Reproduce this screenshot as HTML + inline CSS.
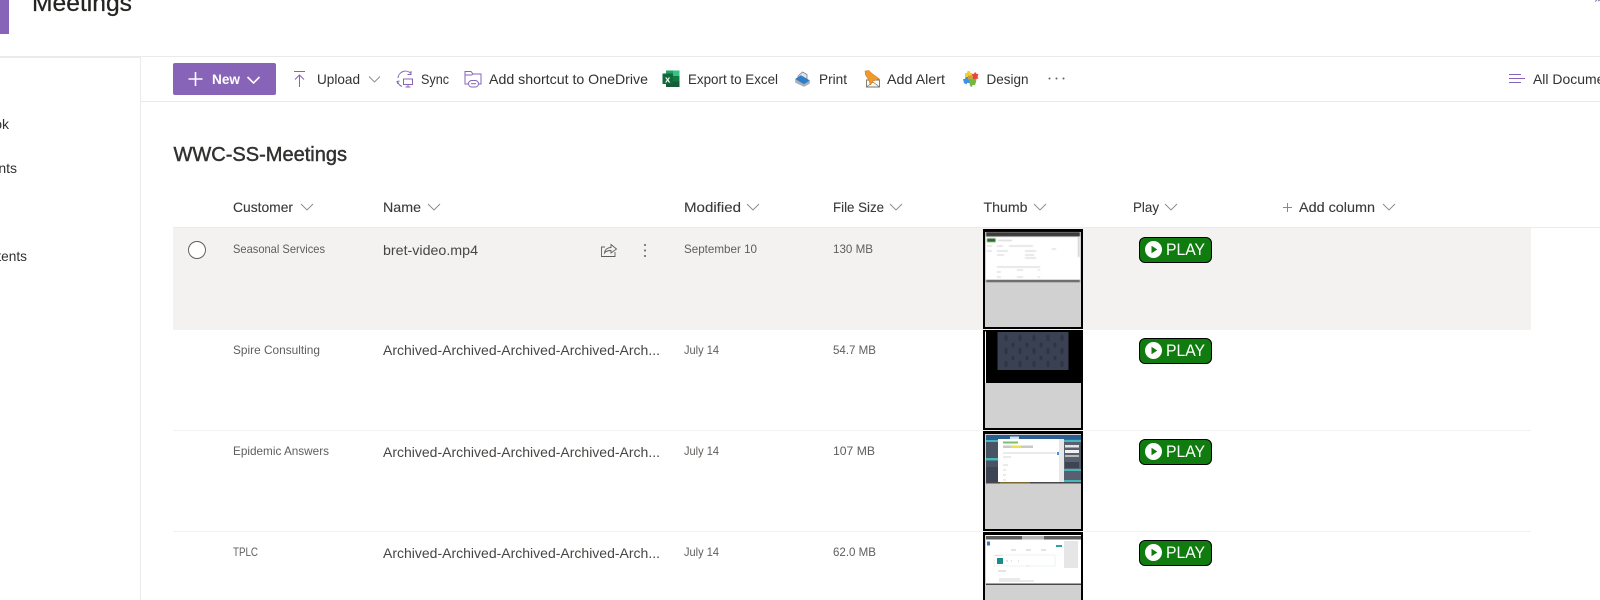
<!DOCTYPE html>
<html><head><meta charset="utf-8"><title>WWC-SS-Meetings</title>
<style>
html,body{margin:0;padding:0;background:#fff;width:1600px;height:600px;overflow:hidden}
svg{display:block;font-family:"Liberation Sans",Arial,sans-serif}
.tb{font-size:14px;fill:#323130}
.h{font-size:14px;fill:#3b3a39;stroke:#3b3a39;stroke-width:.12}
.c{font-size:12px;fill:#605e5c}
.n{font-size:14px;fill:#484644}
.m{font-size:12px;fill:#605e5c}
.pl{font-size:17px;fill:#fff}
.chev{fill:none;stroke:#8a8886;stroke-width:.9}
.ic{fill:none;stroke:#8764b8;stroke-width:1}
</style></head><body>
<svg width="1600" height="600" viewBox="0 0 1600 600" xmlns="http://www.w3.org/2000/svg">
<defs>
<filter id="b"><feGaussianBlur stdDeviation=".6"/></filter>
<filter id="s"><feGaussianBlur stdDeviation=".3"/></filter>
<g id="play">
<rect x=".5" y=".5" width="72" height="25" rx="5.5" fill="#107c10" stroke="#000"/>
<circle cx="14.5" cy="12.5" r="8.5" fill="#fff"/>
<path d="M12.5 8.8 L18.3 12.5 L12.5 16.2Z" fill="#107c10"/>
<text class="pl" x="27" y="18" textLength="39" lengthAdjust="spacingAndGlyphs">PLAY</text>
</g>
</defs>

<!-- site header -->
<rect x="0" y="0" width="9" height="34" fill="#8764b8"/>
<text x="32" y="11" font-size="24" fill="#252423" stroke="#252423" stroke-width=".25" textLength="100" lengthAdjust="spacingAndGlyphs">Meetings</text>
<path d="M1595 1.5 L1597 0 M1598 1 L1600 0" stroke="#8a7ab0" stroke-width="1"/>
<rect x="0" y="56" width="1600" height="1" fill="#eaeaea"/>
<rect x="0" y="57" width="140" height="1" fill="#eaeaea"/>
<rect x="140" y="57" width="1" height="543" fill="#eaeaea"/>
<rect x="141" y="101" width="1459" height="1" fill="#eaeaea"/>

<!-- left nav -->
<text class="tb" x="9" y="129" text-anchor="end">Notebook</text>
<text class="tb" x="17" y="173" text-anchor="end">Documents</text>
<text class="tb" x="-52" y="261" textLength="79" lengthAdjust="spacingAndGlyphs">Site contents</text>

<!-- command bar -->
<rect x="173" y="63" width="103" height="32" rx="2" fill="#8764b8"/>
<path d="M195.5 72 V86 M188.5 79 H202.5" stroke="#fff" stroke-width="1.6" fill="none"/>
<text x="212" y="84" font-size="14" font-weight="700" fill="#fff" textLength="28" lengthAdjust="spacingAndGlyphs">New</text>
<path d="M247.5 77 L253.5 83 L259.5 77" fill="none" stroke="#fff" stroke-width="1.6"/>

<path d="M294 71.5 H305 M299.5 87 V75 M295 79.5 L299.5 75 L304 79.5" class="ic"/>
<text class="tb" x="317" y="84" textLength="43" lengthAdjust="spacingAndGlyphs">Upload</text>
<path class="chev" d="M369 76.5 L374.5 82 L380 76.5"/>

<g class="ic">
<path d="M398 78 A7.5 7.5 0 0 1 411 73.5 M411 71 V74.5 H407.5"/>
<path d="M397.5 81 A7.5 7.5 0 0 0 402 86.5 M398 84 L397 81.5 L399.5 81"/>
<rect x="403.5" y="79" width="9" height="5.5"/><path d="M408 84.5 V87 M405.5 87 H410.5"/>
</g>
<text class="tb" x="421" y="84" textLength="28" lengthAdjust="spacingAndGlyphs">Sync</text>

<g class="ic">
<path d="M468 84 H465 V71.5 H471 L473 74 H481 V84 H479 M465 75 H471.5 L473 74"/>
<rect x="468.5" y="80.5" width="10" height="6.5" rx="3.2"/><path d="M471 83.7 H476"/>
</g>
<text class="tb" x="489" y="84" textLength="159" lengthAdjust="spacingAndGlyphs">Add shortcut to OneDrive</text>

<rect x="666" y="70.5" width="13.5" height="16.5" rx=".5" fill="#107c41"/>
<rect x="673" y="70.5" width="6.5" height="5.5" fill="#33c481"/>
<rect x="666" y="70.5" width="7" height="5.5" fill="#21a366"/>
<rect x="673" y="76" width="6.5" height="5.5" fill="#107c41"/>
<rect x="673" y="81.5" width="6.5" height="5.5" fill="#185c37"/>
<rect x="666" y="81.5" width="7" height="5.5" fill="#185c37"/>
<rect x="662.5" y="73.5" width="10.5" height="10.5" rx=".5" fill="#0e6b3a"/>
<text x="665" y="82.5" font-size="9.5" font-weight="700" fill="#fff">x</text>
<text class="tb" x="688" y="84" textLength="90" lengthAdjust="spacingAndGlyphs">Export to Excel</text>

<g filter="url(#s)">
<path d="M798 76 L802.5 72 L807 74.5 L807 79 L798 79Z" fill="#e0e4ea" stroke="#76818f" stroke-width=".8"/>
<path d="M795.5 79 L801 75.5 L809.5 80.5 L804 84Z" fill="#2a7fd0" stroke="#4f6f92" stroke-width=".5"/>
<path d="M795.5 79.5 L804 84.5 L809.5 81 L809.5 83.5 L804 86.5 L795.5 82.5Z" fill="#aab3bd" stroke="#8a94a0" stroke-width=".4"/>
</g>
<text class="tb" x="819" y="84" textLength="28" lengthAdjust="spacingAndGlyphs">Print</text>

<g>
<path d="M866.5 80 H879.5 V87 H866.5Z" fill="#fbfbf8" stroke="#77736a" stroke-width=".9"/>
<path d="M867 86.5 L873 82 L879 86.5" fill="none" stroke="#77736a" stroke-width=".7"/>
<path d="M865 71 L869 70.5 L872 73.5 L879.5 79 L873 81 L870.5 85 L868.5 79.5 L865.5 75Z" fill="#f09a2e" stroke="#c57018" stroke-width=".5"/>
</g>
<text class="tb" x="887" y="84" textLength="58" lengthAdjust="spacingAndGlyphs">Add Alert</text>

<g>
<path d="M965 73 L967 73 L967.5 71 L970 71 L970.5 73 L972.5 73 L972.5 77 L965 77Z" fill="#f4cf2e"/>
<path d="M972 74 L974 74 L974.5 72.5 L976 72.5 L976.5 74 L978.5 74 L977.5 76.5 L978.5 78.5 L972 79.5Z" fill="#e6453a"/>
<path d="M963 79 L965 79 L965.5 77 L969.5 77 L969.5 83 L967 83 L966.5 84.5 L964 83 Z" fill="#3f93e0"/>
<path d="M969.5 79 L976.5 79 L976 82 L975 85 L972.5 85 L972 87 L970 86 L969.5 83Z" fill="#74b83c"/>
<rect x="968" y="75.5" width="5" height="4" fill="#c9a040"/>
</g>
<text class="tb" x="986.5" y="84" textLength="42" lengthAdjust="spacingAndGlyphs">Design</text>
<g fill="#605e5c"><circle cx="1049.5" cy="78.5" r="1"/><circle cx="1056.5" cy="78.5" r="1"/><circle cx="1063.5" cy="78.5" r="1"/></g>

<path d="M1509 74.5 H1521 M1509 78.5 H1525 M1509 82.5 H1521" stroke="#8764b8" stroke-width="1" fill="none"/>
<text class="tb" x="1533" y="84" textLength="90" lengthAdjust="spacingAndGlyphs">All Documents</text>

<!-- title -->
<text x="173.5" y="161" font-size="20" fill="#323130" stroke="#323130" stroke-width=".45" textLength="173.5" lengthAdjust="spacingAndGlyphs">WWC-SS-Meetings</text>

<!-- column headers -->
<text class="h" x="233" y="212" textLength="60" lengthAdjust="spacingAndGlyphs">Customer</text>
<path class="chev" d="M301 204 L307 210 L313 204"/>
<text class="h" x="383" y="212" textLength="38" lengthAdjust="spacingAndGlyphs">Name</text>
<path class="chev" d="M428 204 L434 210 L440 204"/>
<text class="h" x="684" y="212" textLength="57" lengthAdjust="spacingAndGlyphs">Modified</text>
<path class="chev" d="M747 204 L753 210 L759 204"/>
<text class="h" x="833" y="212" textLength="51" lengthAdjust="spacingAndGlyphs">File Size</text>
<path class="chev" d="M890 204 L896 210 L902 204"/>
<text class="h" x="983.5" y="212" textLength="44" lengthAdjust="spacingAndGlyphs">Thumb</text>
<path class="chev" d="M1034 204 L1040 210 L1046 204"/>
<text class="h" x="1133" y="212" textLength="26" lengthAdjust="spacingAndGlyphs">Play</text>
<path class="chev" d="M1165 204 L1171 210 L1177 204"/>
<path d="M1283 207.5 H1292 M1287.5 203 V212" stroke="#8a8886" fill="none"/>
<text class="h" x="1299" y="212" textLength="76" lengthAdjust="spacingAndGlyphs">Add column</text>
<path class="chev" d="M1383 204 L1389 210 L1395 204"/>
<rect x="173" y="227" width="1427" height="1" fill="#edebe9"/>

<!-- rows -->
<rect x="173" y="228" width="1358" height="102" fill="#f3f2f1"/>
<rect x="173" y="430" width="1358" height="1" fill="#f3f2f1"/>
<rect x="173" y="531" width="1358" height="1" fill="#f3f2f1"/>

<circle cx="197" cy="250" r="8.5" fill="#fff" stroke="#605e5c"/>
<g fill="none" stroke="#605e5c" stroke-width=".9">
<path d="M605 247 H601.5 V256.5 H615 V252"/>
<path d="M604.5 253 C605 249 608 247.5 611 247.5 V244.5 L616.5 249 L611 253 V250.5 C608.5 250.5 606 251 604.5 253Z"/>
</g>
<g fill="#605e5c"><circle cx="645" cy="245" r="1"/><circle cx="645" cy="250.5" r="1"/><circle cx="645" cy="256" r="1"/></g>

<text class="c" x="233" y="253" textLength="92" lengthAdjust="spacingAndGlyphs">Seasonal Services</text>
<text class="n" x="383" y="255" textLength="95" lengthAdjust="spacingAndGlyphs">bret-video.mp4</text>
<text class="m" x="684" y="253" textLength="73" lengthAdjust="spacingAndGlyphs">September 10</text>
<text class="m" x="833" y="253" textLength="40" lengthAdjust="spacingAndGlyphs">130 MB</text>

<text class="c" x="233" y="354" textLength="87" lengthAdjust="spacingAndGlyphs">Spire Consulting</text>
<text class="n" x="383" y="355" textLength="277" lengthAdjust="spacingAndGlyphs">Archived-Archived-Archived-Archived-Arch...</text>
<text class="m" x="684" y="354" textLength="35" lengthAdjust="spacingAndGlyphs">July 14</text>
<text class="m" x="833" y="354" textLength="43" lengthAdjust="spacingAndGlyphs">54.7 MB</text>

<text class="c" x="233" y="455" textLength="96" lengthAdjust="spacingAndGlyphs">Epidemic Answers</text>
<text class="n" x="383" y="457" textLength="277" lengthAdjust="spacingAndGlyphs">Archived-Archived-Archived-Archived-Arch...</text>
<text class="m" x="684" y="455" textLength="35" lengthAdjust="spacingAndGlyphs">July 14</text>
<text class="m" x="833" y="455" textLength="42" lengthAdjust="spacingAndGlyphs">107 MB</text>

<text class="c" x="233" y="556" textLength="25" lengthAdjust="spacingAndGlyphs">TPLC</text>
<text class="n" x="383" y="558" textLength="277" lengthAdjust="spacingAndGlyphs">Archived-Archived-Archived-Archived-Arch...</text>
<text class="m" x="684" y="556" textLength="35" lengthAdjust="spacingAndGlyphs">July 14</text>
<text class="m" x="833" y="556" textLength="43" lengthAdjust="spacingAndGlyphs">62.0 MB</text>

<!-- thumb 1 -->
<rect x="983" y="229" width="100" height="100" fill="#000"/>
<rect x="985" y="232" width="96" height="95" fill="#d1d1d1"/>
<rect x="986" y="232" width="94" height="50" fill="#fff"/>
<g filter="url(#b)">
<rect x="986" y="232" width="94" height="4.5" fill="#3a3a3a"/>
<rect x="986" y="280" width="94" height="2" fill="#4a4a4a"/>
<rect x="987" y="238.5" width="8.5" height="3.5" fill="#2c6b2c"/>
<rect x="998" y="240" width="14" height="1" fill="#ccc"/>
<path d="M987 246 H992 M997 246 H1003 M1009 246 H1033 M987 251 H992 M997 251 H1008 M1025 251 H1036 M1052 249 H1056 M997 255 H1004 M1025 255 H1034 M1025 258 H1036 M997 267 H1040 M997 272 H1001 M1017 270 H1023 M1038 270 H1040 M997 277 H1001 M1017 277 H1023 M1038 277 H1040" stroke="#d0d0d0" stroke-width="1" fill="none"/>
<rect x="1078" y="237" width="1.5" height="20" fill="#ccc"/>
</g>

<!-- thumb 2 -->
<rect x="983" y="330" width="100" height="100" fill="#000"/>
<rect x="985" y="331.5" width="96" height="96.5" fill="#d1d1d1"/>
<rect x="985" y="331.5" width="1" height="51.5" fill="#fff"/>
<rect x="986" y="331.5" width="95" height="51.5" fill="#000"/>
<rect x="997.5" y="332" width="71" height="38" fill="#3a4152"/>
<g fill="#2e3444" filter="url(#s)">
<ellipse cx="1006" cy="338" rx="1.6" ry="3.5"/><ellipse cx="1020" cy="338" rx="1.6" ry="3.5"/><ellipse cx="1034" cy="338" rx="1.6" ry="3.5"/><ellipse cx="1048" cy="338" rx="1.6" ry="3.5"/><ellipse cx="1062" cy="338" rx="1.6" ry="3.5"/>
<ellipse cx="1013" cy="345" rx="1.6" ry="2.5"/><ellipse cx="1027" cy="345" rx="1.6" ry="2.5"/><ellipse cx="1041" cy="345" rx="1.6" ry="2.5"/><ellipse cx="1055" cy="345" rx="1.6" ry="2.5"/>
<ellipse cx="1006" cy="351" rx="1.6" ry="3.5"/><ellipse cx="1020" cy="351" rx="1.6" ry="3.5"/><ellipse cx="1034" cy="351" rx="1.6" ry="3.5"/><ellipse cx="1048" cy="351" rx="1.6" ry="3.5"/><ellipse cx="1062" cy="351" rx="1.6" ry="3.5"/>
<ellipse cx="1013" cy="358" rx="1.6" ry="2.5"/><ellipse cx="1027" cy="358" rx="1.6" ry="2.5"/><ellipse cx="1041" cy="358" rx="1.6" ry="2.5"/><ellipse cx="1055" cy="358" rx="1.6" ry="2.5"/>
<ellipse cx="1006" cy="364" rx="1.6" ry="3.5"/><ellipse cx="1020" cy="364" rx="1.6" ry="3.5"/><ellipse cx="1034" cy="364" rx="1.6" ry="3.5"/><ellipse cx="1048" cy="364" rx="1.6" ry="3.5"/><ellipse cx="1062" cy="364" rx="1.6" ry="3.5"/>
</g>

<!-- thumb 3 -->
<rect x="983" y="431" width="100" height="100" fill="#000"/>
<rect x="985" y="434" width="96" height="95" fill="#d1d1d1"/>
<rect x="986" y="435" width="95" height="48.5" fill="#e8e8e8"/>
<rect x="998" y="439" width="61" height="44" fill="#fff"/>
<g filter="url(#s)">
<rect x="986" y="435" width="95" height="4" fill="#2a5d92"/>
<rect x="1010" y="436.5" width="9" height="2.5" fill="#cfe0f0"/>
<rect x="986" y="439" width="12" height="44.5" fill="#4a5364"/>
<rect x="986" y="440" width="12" height="2" fill="#45b7bd"/>
<rect x="986" y="458" width="12" height="2.5" fill="#45b7bd"/>
<rect x="986" y="467" width="12" height="16.5" fill="#3c4553"/>
<rect x="1064" y="439" width="17" height="44.5" fill="#596070"/>
<rect x="1064" y="440" width="17" height="2" fill="#45b7bd"/>
<rect x="1065" y="445" width="14" height="2.5" fill="#e5e5e5"/>
<rect x="1065" y="450" width="14" height="3" fill="#f2f2f2"/>
<rect x="1065" y="455" width="14" height="2" fill="#bbb"/>
<rect x="1065" y="462" width="14" height="6" fill="#3c4553"/>
<rect x="1064" y="469" width="17" height="2" fill="#45b7bd"/>
<rect x="1064" y="480" width="17" height="2" fill="#45b7bd"/>
<rect x="1003" y="441.5" width="15" height="2" fill="#7cc06a"/>
<rect x="1003" y="445.5" width="9" height="2.5" fill="#c9c9c9"/>
<rect x="1011" y="445.5" width="10" height="2.5" fill="#e9e24a"/>
<rect x="1021" y="445.5" width="12" height="2.5" fill="#c9c9c9"/>
<path d="M1003 453 H1056 M1003 457 H1011 M1003 465 H1008 M1003 470 H1006 M1003 475 H1006 M1003 480 H1006" stroke="#d5d5d5" fill="none"/>
<rect x="1057" y="452" width="2" height="3" fill="#4a90d0"/>
<rect x="986" y="482" width="95" height="1.5" fill="#4a4a4a"/>
<rect x="1000" y="482" width="30" height="1.5" fill="#7a6a30"/>
</g>

<!-- thumb 4 -->
<rect x="983" y="532" width="100" height="68" fill="#000"/>
<rect x="985" y="535" width="96" height="65" fill="#d1d1d1"/>
<rect x="986" y="535" width="95" height="50" fill="#fff"/>
<g filter="url(#s)">
<rect x="986" y="536" width="36" height="3.5" fill="#5a5a5a"/>
<rect x="1022" y="536" width="22" height="3.5" fill="#b5b5b5"/>
<rect x="1044" y="536" width="37" height="3.5" fill="#5a5a5a"/>
<rect x="987" y="541.5" width="3" height="4" fill="#2d7fd3"/>
<rect x="1056" y="545" width="6" height="2" fill="#2aa6a6"/>
<rect x="997" y="558" width="6" height="6" fill="#1d8a86"/>
<rect x="995" y="555" width="8" height="1" fill="#cfe5c8"/>
<path d="M1011 550 H1016 M1026 550 H1031 M1041 550 H1046 M1006 561 H1008 M1011 561 H1012 M1018 561 H1019 M1026 566 H1029 M998 571 H1006" stroke="#c8c8c8" fill="none"/>
<rect x="994" y="555" width="61" height="11" fill="none" stroke="#e7efe5" stroke-width=".7"/>
<rect x="1064" y="541" width="14" height="27" fill="#e6e6e6"/>
<path d="M999 579 H1020 M999 581 H1034" stroke="#d5d5d5" fill="none"/>
<rect x="986" y="583.5" width="95" height="1.5" fill="#4a4a4a"/>
</g>

<!-- play buttons -->
<use href="#play" x="1139" y="237"/>
<use href="#play" x="1139" y="338"/>
<use href="#play" x="1139" y="439"/>
<use href="#play" x="1139" y="540"/>
</svg>
</body></html>
